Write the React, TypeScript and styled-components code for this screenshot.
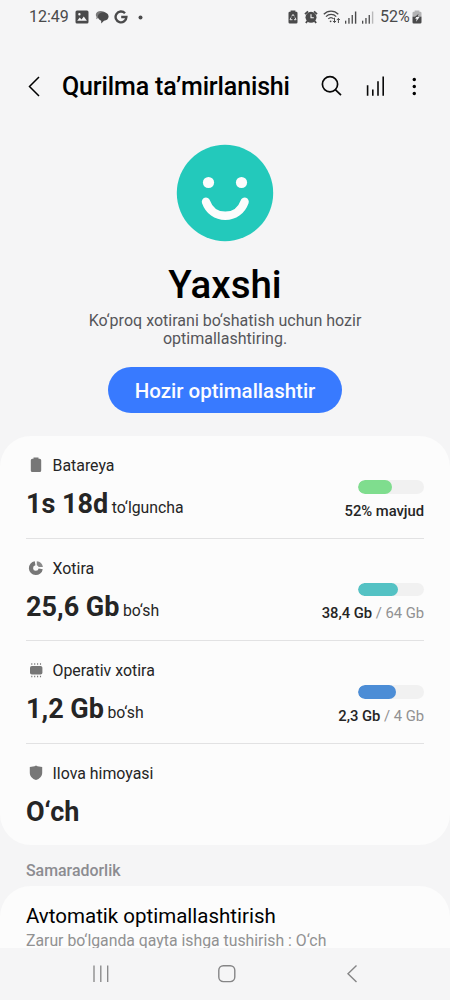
import React from "react";
import styled, { createGlobalStyle } from "styled-components";

const GlobalStyle = createGlobalStyle`
  * { box-sizing: border-box; }
  body { margin: 0; background: #f5f5f6; font-family: Roboto, "Liberation Sans", sans-serif; }
  svg { display: block; flex: none; }
`;

const Screen = styled.div`
  width: 450px;
  height: 1000px;
  overflow: hidden;
  display: flex;
  flex-direction: column;
  background: #f5f5f6;
  color: #000;
`;

const StatusBar = styled.div`
  height: 34px;
  flex: none;
  display: flex;
  align-items: center;
  justify-content: space-between;
  padding: 0 28.5px 0 29px;
  color: #4a4a4b;
  font-size: 16px;
`;

const StatusText = styled.span<{ $spacing?: string }>`
  line-height: 20px;
  letter-spacing: ${(p) => p.$spacing ?? "0"};
  white-space: nowrap;
`;

const StatusGroup = styled.div`
  display: flex;
  align-items: center;
`;

const Slot = styled.span<{ $left?: number }>`
  margin-left: ${(p) => p.$left ?? 0}px;
`;

const AppBar = styled.header`
  height: 106px;
  flex: none;
  display: flex;
  align-items: center;
  padding: 0 25px 1px 26px;
`;

const Title = styled.h1`
  margin: 0 0 0 19px;
  flex: 1;
  font-size: 25px;
  font-weight: 500;
  line-height: 30px;
  letter-spacing: -0.14px;
  white-space: nowrap;
`;

const Actions = styled.div`
  display: flex;
  align-items: center;
`;

const Content = styled.main`
  flex: 1;
  min-height: 0;
  overflow: hidden;
  display: flex;
  flex-direction: column;
`;

const Hero = styled.section`
  height: 296px;
  flex: none;
  display: flex;
  flex-direction: column;
  align-items: center;
  padding-top: 4px;
`;

const Grade = styled.h2`
  margin: 20px 0 0;
  font-size: 38.5px;
  font-weight: 500;
  line-height: 46px;
`;

const Hint = styled.p`
  margin: 4px 0 0;
  width: 300px;
  text-align: center;
  font-size: 16.05px;
  line-height: 18.4px;
  color: #55555a;
`;

const OptimizeButton = styled.button`
  margin-top: 18px;
  width: 234px;
  height: 46px;
  border: 0;
  border-radius: 23px;
  background: #387aff;
  color: #fcfcff;
  font: 500 20.5px/46px Roboto, sans-serif;
  padding: 1px 0 0;
  white-space: nowrap;
`;

const Card = styled.section`
  flex: none;
  background: #fcfcfc;
  border-radius: 31px;
  padding: 0 26px;
`;

const Row = styled.div<{ $last?: boolean }>`
  height: ${(p) => (p.$last ? 101.5 : 102.5)}px;
  border-bottom: ${(p) => (p.$last ? "0" : "1px solid #e2e2e3")};
  display: flex;
  justify-content: space-between;
`;

const Info = styled.div`
  padding-top: 20px;
`;

const Label = styled.div`
  display: flex;
  align-items: center;
  gap: 6.5px;
  font-size: 15.9px;
  line-height: 20px;
  color: #252525;
`;

const Value = styled.div`
  margin-top: 12px;
  font-size: 27px;
  line-height: 32px;
  font-weight: 700;
  color: #252525;
  white-space: nowrap;
`;

const Unit = styled.span`
  margin-left: 3.5px;
  font-size: 15.8px;
  font-weight: 400;
`;

const Usage = styled.div`
  padding-top: 44.3px;
  display: flex;
  flex-direction: column;
  align-items: flex-end;
`;

const Track = styled.div`
  width: 66px;
  height: 13.5px;
  border-radius: 7px;
  background: #f1f1f1;
  overflow: hidden;
`;

const Fill = styled.div<{ $color: string }>`
  height: 100%;
  border-radius: 7px;
  background: ${(p) => p.$color};
`;

const Caption = styled.div`
  margin-top: 8.2px;
  font-size: 14.8px;
  line-height: 18px;
  font-weight: 500;
  letter-spacing: -0.03px;
  color: #252525;
  white-space: nowrap;
`;

const Total = styled.span`
  font-weight: 400;
  color: #919192;
`;

const SectionTitle = styled.h3`
  margin: 0;
  flex: none;
  height: 41px;
  padding: 16px 26px 0;
  font-size: 15.9px;
  line-height: 20px;
  font-weight: 500;
  color: #8c8c91;
`;

const SettingTitle = styled.div`
  padding-top: 18px;
  font-size: 20.5px;
  line-height: 24px;
  color: #000;
  white-space: nowrap;
`;

const SettingHint = styled.div`
  margin-top: 3px;
  height: 60px;
  font-size: 15.8px;
  line-height: 20px;
  color: #919192;
  white-space: nowrap;
`;

const NavBar = styled.nav`
  height: 52px;
  flex: none;
  display: flex;
  align-items: center;
  gap: 108px;
  padding: 0 89px 0 92px;
  background: #f5f5f6;
`;

const PhotoIcon = () => (
  <svg width="14" height="14" viewBox="0 0 14 14">
    <path fillRule="evenodd" fill="#4a4a4b" d="M2 .5h10A1.5 1.5 0 0 1 13.500 2v10a1.500 1.500 0 0 1-1.500 1.500H2A1.500 1.500 0 0 1 .5 12V2A1.500 1.500 0 0 1 2 .5ZM2.200 10.800h9.700L8.800 6.600 6.500 9.400 4.700 7.600ZM4.400 3a1.200 1.200 0 1 0 0 2.400 1.200 1.200 0 0 0 0-2.400Z" />
  </svg>
);

const ChatIcon = () => (
  <svg width="14" height="14" viewBox="0 0 14 14">
    <path fill="#7b7b7c" d="M.8 4.800C.8 2.700 3 1 5.800 1c2 0 3.700.7 4.500 1.900L4 4 3 8 1.200 9.200 1.600 7A4 4 0 0 1 .8 4.800Z" />
    <path fill="#4a4a4b" d="M8.300 2.200c3 0 5.300 1.800 5.300 4.300 0 2.300-1.900 4.100-4.600 4.300L6.200 13.500V10.700C4.200 10 2.900 8.500 2.900 6.500c0-2.500 2.400-4.300 5.400-4.300Z" />
  </svg>
);

const GoogleIcon = () => (
  <svg width="14" height="14" viewBox="0 0 14 14" fill="none" stroke="#4a4a4b" strokeWidth="2.400">
    <path d="M11 3.300A5.400 5.400 0 1 0 12.400 7H7.200" />
  </svg>
);

const BatterySaverIcon = () => (
  <svg width="10" height="14" viewBox="0 0 10 14">
    <path fill="#4a4a4b" d="M2.600.5h4.800V1.700h.8A1.300 1.300 0 0 1 9.500 3v9.200a1.300 1.300 0 0 1-1.300 1.300H1.800A1.300 1.300 0 0 1 .5 12.200V3a1.300 1.300 0 0 1 1.300-1.300h.8Z" />
    <path d="M3.700 6.300 5 4.400l1.300 1.900M7 7.500l1 2.200H6M4.400 9.700H2l1-2.200" fill="none" stroke="#f5f5f6" strokeWidth=".9" />
  </svg>
);

const AlarmIcon = () => (
  <svg width="14" height="14" viewBox="0 0 14 14">
    <circle cx="7" cy="7.300" r="5.500" fill="#4a4a4b" />
    <path d="M1 4.200 4 1.300M13 4.200 10 1.300M3.300 11 1.900 13M10.700 11l1.400 2" stroke="#4a4a4b" strokeWidth="1.800" />
    <path d="M7 4.200v3.500h2.800" fill="none" stroke="#f5f5f6" strokeWidth="1.100" />
  </svg>
);

const WifiIcon = () => (
  <svg width="18" height="14" viewBox="0 0 18 14" fill="none" stroke="#4a4a4b" strokeWidth="1.300">
    <path d="M.8 4.200C4.800 0 11.300 0 15.300 4.200M3 6.600c2.800-2.900 7.400-2.900 10.200 0M5.300 8.900c1.600-1.600 3.700-1.600 5.300 0" />
    <circle cx="7.600" cy="11.300" r=".9" fill="#4a4a4b" stroke="none" />
    <path d="M11.500 7.800v4.500M9.900 10.900l1.600 1.700 1.600-1.700M15.400 13V8.500M13.900 10l1.500-1.600L16.900 10" strokeWidth="1" />
  </svg>
);

const SignalIcon = ({ weak }: { weak?: boolean }) => (
  <svg width="12" height="13" viewBox="0 0 12 13" fill="#4a4a4b">
    <rect x="0" y="9.700" width="1.300" height="3" />
    <rect x="3.300" y="7" width="1.300" height="5.700" />
    <rect x="6.600" y="4" width="1.300" height="8.700" />
    <rect x="9.900" y=".5" width="1.400" height="12.200" fill={weak ? "#b9b9ba" : "#4a4a4b"} />
  </svg>
);

const ChargingIcon = () => (
  <svg width="10" height="14" viewBox="0 0 10 14">
    <path fill="#b4b4b5" d="M2.600.5h4.800V1.700h.8A1.300 1.300 0 0 1 9.500 3v4h-9V3a1.300 1.300 0 0 1 1.300-1.300h.8Z" />
    <path fill="#4a4a4b" d="M.5 6.800h9v5.400a1.300 1.300 0 0 1-1.300 1.300H1.800A1.300 1.300 0 0 1 .5 12.200Z" />
    <path fill="#4a4a4b" d="M6.600 3.800 2.400 7.500h3Z" />
    <path fill="#f5f5f6" d="M7.600 7 4 11.800 4.700 8.800H3.200L4.200 7Z" />
  </svg>
);

const BackIcon = () => (
  <svg width="17" height="24" viewBox="0 0 17 24" fill="none" stroke="#000" strokeWidth="1.500">
    <path d="M13 2 3.500 11.500 13 21" />
  </svg>
);

const SearchIcon = () => (
  <svg width="24" height="24" viewBox="0 0 24 24" fill="none" stroke="#080808" strokeWidth="1.700">
    <circle cx="11" cy="9.300" r="7.600" />
    <path d="m16.300 14.700 5.700 5.500" />
  </svg>
);

const ChartIcon = () => (
  <svg width="24" height="24" viewBox="0 0 24 24" fill="none" stroke="#080808" strokeWidth="1.600">
    <path d="M4.600 10.200v10.600M9.800 14.500v6.300M15 6.200v14.600M20.200 1.600v19.200" />
  </svg>
);

const ChartSlot = styled.span`
  margin: 0 16px 0 20px;
`;

const MoreIcon = () => (
  <svg width="22" height="24" viewBox="0 0 22 24" fill="#000">
    <circle cx="11.300" cy="4.500" r="1.700" />
    <circle cx="11.300" cy="11.500" r="1.700" />
    <circle cx="11.300" cy="18.500" r="1.700" />
  </svg>
);

const Smiley = () => (
  <svg width="98" height="98" viewBox="0 0 98 98">
    <circle cx="49" cy="49" r="48.200" fill="#23c9bb" />
    <circle cx="32.500" cy="38.500" r="5.600" fill="#fcfcfc" />
    <circle cx="65.500" cy="38.500" r="5.600" fill="#fcfcfc" />
    <path d="M30 57.800c3.200 9 10.500 14 19.300 14s16.100-5 19.300-14" fill="none" stroke="#fcfcfc" strokeWidth="8.400" strokeLinecap="round" />
  </svg>
);

const BatteryIcon = () => (
  <svg width="20" height="20" viewBox="0 0 20 20">
    <path fill="#777" d="M7.500 1.500h5v1.200h1.200a1.500 1.500 0 0 1 1.500 1.500v10.300a1.500 1.500 0 0 1-1.500 1.500H6.300a1.500 1.500 0 0 1-1.500-1.500V4.200a1.500 1.500 0 0 1 1.500-1.500h1.200Z" />
  </svg>
);

const StorageIcon = () => (
  <svg width="20" height="20" viewBox="0 0 20 20">
    <path d="M9.100 4.200A4.900 4.900 0 1 0 14.700 9.800" fill="none" stroke="#777" strokeWidth="4.200" />
    <path d="M10.800 2.300a6.800 6.800 0 0 1 6.100 5.800h-4.200a2.900 2.900 0 0 0-1.900-1.800Z" fill="#8a8a8a" />
  </svg>
);

const MemoryIcon = () => (
  <svg width="20" height="20" viewBox="0 0 20 20">
    <rect x="4" y="5" width="12.400" height="8.600" rx="1.800" fill="#777" />
    <path d="M5.800 2.200v1.600M8.700 2.200v1.600M11.600 2.200v1.600M14.500 2.200v1.600M5.800 14.700v1.600M8.700 14.700v1.600M11.600 14.700v1.600M14.500 14.700v1.600" stroke="#777" strokeWidth="1.100" />
  </svg>
);

const ShieldIcon = () => (
  <svg width="20" height="20" viewBox="0 0 20 20">
    <path fill="#777" d="M10 1.500c1.900 1 4 1.400 6.200 1.500v5.700c0 3.400-2.500 6.100-6.200 7.300-3.700-1.200-6.200-3.900-6.200-7.300V3c2.200-.1 4.300-.5 6.200-1.500Z" />
  </svg>
);

const RecentsIcon = () => (
  <svg width="18" height="18" viewBox="0 0 18 18" stroke="#858586" strokeWidth="1.300">
    <path d="M2 .5v16.500M8.800 .5v16.500M15.700 .5v16.500" />
  </svg>
);

const HomeIcon = () => (
  <svg width="18" height="18" viewBox="0 0 18 18" fill="none" stroke="#858586" strokeWidth="1.400">
    <rect x=".8" y=".8" width="16" height="15.800" rx="4.500" />
  </svg>
);

const NavBackIcon = () => (
  <svg width="14" height="18" viewBox="0 0 14 18" fill="none" stroke="#858586" strokeWidth="1.400">
    <path d="M12.500.5 4 8.800l8.500 8.300" />
  </svg>
);

interface Stat {
  icon: React.ReactNode;
  label: string;
  value: string;
  unit?: string;
  usage?: { percent: number; color: string; used: string; total?: string };
}

const stats: Stat[] = [
  { icon: <BatteryIcon />, label: "Batareya", value: "1s 18d", unit: "to‘lguncha", usage: { percent: 52, color: "#7fdd8e", used: "52% mavjud" } },
  { icon: <StorageIcon />, label: "Xotira", value: "25,6 Gb", unit: "bo‘sh", usage: { percent: 61, color: "#54c2c4", used: "38,4 Gb", total: " / 64 Gb" } },
  { icon: <MemoryIcon />, label: "Operativ xotira", value: "1,2 Gb", unit: "bo‘sh", usage: { percent: 57, color: "#4c8dd6", used: "2,3 Gb", total: " / 4 Gb" } },
  { icon: <ShieldIcon />, label: "Ilova himoyasi", value: "O‘ch" },
];

export default function App() {
  return (
    <Screen>
      <GlobalStyle />
      <StatusBar>
        <StatusGroup>
          <StatusText>12:49</StatusText>
          <Slot $left={6}><PhotoIcon /></Slot>
          <Slot $left={6}><ChatIcon /></Slot>
          <Slot $left={5}><GoogleIcon /></Slot>
          <Slot $left={10}>
            <svg width="5" height="5" viewBox="0 0 5 5"><circle cx="2.500" cy="2.500" r="2" fill="#4a4a4b" /></svg>
          </Slot>
        </StatusGroup>
        <StatusGroup>
          <BatterySaverIcon />
          <Slot $left={6}><AlarmIcon /></Slot>
          <Slot $left={5}><WifiIcon /></Slot>
          <Slot $left={4}><SignalIcon /></Slot>
          <Slot $left={5}><SignalIcon weak /></Slot>
          <Slot $left={6}><StatusText $spacing="-0.1px">52%</StatusText></Slot>
          <Slot $left={2}><ChargingIcon /></Slot>
        </StatusGroup>
      </StatusBar>
      <AppBar>
        <BackIcon />
        <Title>Qurilma ta’mirlanishi</Title>
        <Actions>
          <SearchIcon />
          <ChartSlot><ChartIcon /></ChartSlot>
          <MoreIcon />
        </Actions>
      </AppBar>
      <Content>
        <Hero>
          <Smiley />
          <Grade>Yaxshi</Grade>
          <Hint>Ko‘proq xotirani bo‘shatish uchun hozir optimallashtiring.</Hint>
          <OptimizeButton>Hozir optimallashtir</OptimizeButton>
        </Hero>
        <Card>
          {stats.map((s, i) => (
            <Row key={s.label} $last={i === stats.length - 1}>
              <Info>
                <Label>{s.icon}{s.label}</Label>
                <Value>{s.value}{s.unit && <Unit>{s.unit}</Unit>}</Value>
              </Info>
              {s.usage && (
                <Usage>
                  <Track><Fill $color={s.usage.color} style={{ width: `${s.usage.percent}%` }} /></Track>
                  <Caption>{s.usage.used}{s.usage.total && <Total>{s.usage.total}</Total>}</Caption>
                </Usage>
              )}
            </Row>
          ))}
        </Card>
        <SectionTitle>Samaradorlik</SectionTitle>
        <Card>
          <SettingTitle>Avtomatik optimallashtirish</SettingTitle>
          <SettingHint>Zarur bo‘lganda qayta ishga tushirish : O‘ch</SettingHint>
        </Card>
      </Content>
      <NavBar>
        <RecentsIcon />
        <HomeIcon />
        <NavBackIcon />
      </NavBar>
    </Screen>
  );
}
